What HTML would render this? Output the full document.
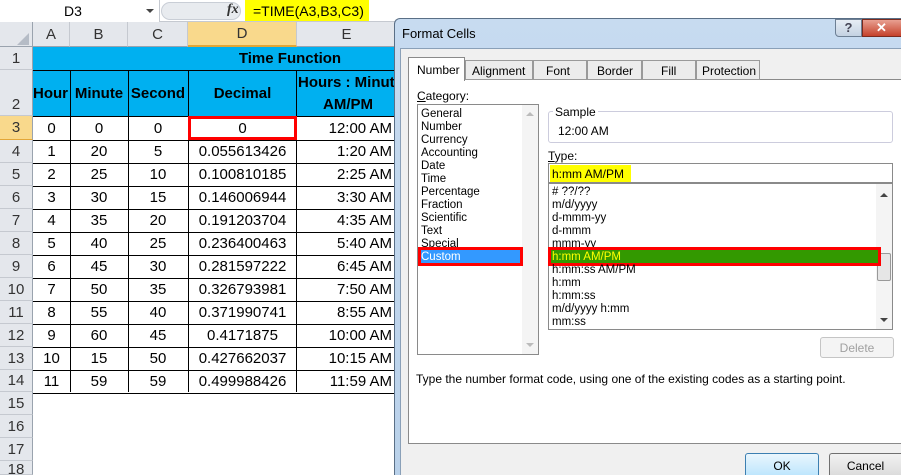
<!DOCTYPE html><html><head><style>
*{margin:0;padding:0;box-sizing:border-box}
html,body{width:901px;height:475px;overflow:hidden}
body{position:relative;background:#fff;font-family:"Liberation Sans",sans-serif}
.a{position:absolute}
.c{position:absolute;display:flex;align-items:center;justify-content:center;font-size:15px;color:#000;white-space:nowrap}
.rh{position:absolute;left:0;width:33px;background:#e4e7ec;border-bottom:1px solid #c5c9d0;border-right:1px solid #9aa3ae;display:flex;align-items:center;justify-content:center;font-size:15px;color:#333}
.ch{position:absolute;top:22px;height:25px;background:#e4e7ec;border-right:1px solid #c5c9d0;border-bottom:1px solid #9aa3ae;display:flex;align-items:center;justify-content:center;font-size:15px;color:#333}
.d{font-size:12px;color:#000}
.li{position:absolute;left:3px;font-size:11.5px;line-height:13px}
</style></head><body>
<div class="a" style="left:0;top:0;width:901px;height:22px;background:#fff;border-bottom:1px solid #c5c9d0"></div>
<div class="a" style="left:0;top:0;width:160px;height:22px;background:#fff;border-right:1px solid #c5c9d0;font-size:14px;padding:3px 0 0 64px">D3</div>
<div class="a" style="left:146px;top:9px;width:0;height:0;border-left:4px solid transparent;border-right:4px solid transparent;border-top:4px solid #444"></div>
<div class="a" style="left:161px;top:2px;width:80px;height:18px;background:#e8ebef;border-radius:9px;border:1px solid #c9ced6"></div>
<div class="a" style="left:227px;top:2px;font-family:'Liberation Serif',serif;font-style:italic;font-weight:bold;font-size:14px;color:#333">fx</div>
<div class="a" style="left:245px;top:0;width:124px;height:21px;background:#ffff00;font-size:14px;padding:3px 0 0 8px">=TIME(A3,B3,C3)</div>
<div class="a" style="left:0;top:22px;width:33px;height:25px;background:#e4e7ec;border-right:1px solid #9aa3ae;border-bottom:1px solid #9aa3ae"></div>
<div class="a" style="left:17px;top:33px;width:0;height:0;border-left:12px solid transparent;border-bottom:12px solid #b5bcc6"></div>
<div class="ch" style="left:33px;width:37px">A</div>
<div class="ch" style="left:70px;width:58px">B</div>
<div class="ch" style="left:128px;width:60px">C</div>
<div class="ch" style="left:188px;width:109px;background:#f9d98c;border-bottom:2px solid #e3a637">D</div>
<div class="ch" style="left:297px;width:100px">E</div>
<div class="rh" style="top:47px;height:23px">1</div>
<div class="rh" style="top:70px;height:46px;align-items:flex-end;padding-bottom:2px">2</div>
<div class="rh" style="top:116px;height:24px;background:#f9d98c;border-bottom-color:#e3a637">3</div>
<div class="rh" style="top:140px;height:23px">4</div>
<div class="rh" style="top:163px;height:23px">5</div>
<div class="rh" style="top:186px;height:23px">6</div>
<div class="rh" style="top:209px;height:23px">7</div>
<div class="rh" style="top:232px;height:23px">8</div>
<div class="rh" style="top:255px;height:23px">9</div>
<div class="rh" style="top:278px;height:23px">10</div>
<div class="rh" style="top:301px;height:23px">11</div>
<div class="rh" style="top:324px;height:23px">12</div>
<div class="rh" style="top:347px;height:23px">13</div>
<div class="rh" style="top:370px;height:22px">14</div>
<div class="rh" style="top:392px;height:23px">15</div>
<div class="rh" style="top:415px;height:23px">16</div>
<div class="rh" style="top:438px;height:23px">17</div>
<div class="rh" style="top:461px;height:14px;align-items:flex-start">18</div>
<div class="a" style="left:33px;top:47px;width:364px;height:69px;background:#00b0f0"></div>
<div class="c" style="left:33px;top:47px;width:514px;height:23px;font-weight:bold">Time Function</div>
<div class="a" style="left:33px;top:70px;width:364px;height:1px;background:#000"></div>
<div class="c" style="left:33px;top:70px;width:37px;height:46px;font-weight:bold;justify-content:flex-start;overflow:hidden">Hour</div>
<div class="c" style="left:70px;top:70px;width:58px;height:46px;font-weight:bold">Minute</div>
<div class="c" style="left:128px;top:70px;width:60px;height:46px;font-weight:bold">Second</div>
<div class="c" style="left:188px;top:70px;width:109px;height:46px;font-weight:bold">Decimal</div>
<div class="a" style="left:298px;top:72px;width:100px;font-size:15px;font-weight:bold;line-height:22px;text-align:center;white-space:nowrap;overflow:hidden">Hours : Minute<br>AM/PM</div>
<div class="a" style="left:70px;top:70px;width:1px;height:322px;background:#000"></div>
<div class="a" style="left:128px;top:70px;width:1px;height:322px;background:#000"></div>
<div class="a" style="left:188px;top:70px;width:1px;height:322px;background:#000"></div>
<div class="a" style="left:296px;top:70px;width:1px;height:322px;background:#000"></div>
<div class="a" style="left:33px;top:116px;width:364px;height:1px;background:#000"></div>
<div id="rows"></div>
<div class="a" style="left:188px;top:116px;width:109px;height:24px;border:3px solid #f00"></div>
<div class="a" style="left:394px;top:18px;width:507px;height:457px;border-radius:6px 0 0 0;background:linear-gradient(#c7dbf0,#b9d1ea);border:1px solid #5a6f86;border-right:none;border-bottom:none"></div>
<div class="a" style="left:402px;top:26px;font-size:13px;color:#000">Format Cells</div>
<div class="a" style="left:835px;top:19px;width:27px;height:18px;background:linear-gradient(#e6edf5,#c4d2e2);border:1px solid #6d7f94;border-radius:0 0 0 4px;text-align:center;font-size:13px;font-weight:bold;color:#445">?</div>
<div class="a" style="left:862px;top:19px;width:45px;height:18px;background:linear-gradient(#e8a091,#c5412b);border:1px solid #7a2a1e;text-align:center;font-size:13px;font-weight:bold;color:#fff;padding-right:6px">✕</div>
<div class="a" style="left:400px;top:48px;width:501px;height:427px;background:#f0f0f0;border:1px solid #8aa0b8;border-right:none;border-bottom:none"></div>
<div class="a" style="left:408px;top:79px;width:493px;height:365px;background:#fff;border:1px solid #8a8a8a;border-right:none"></div>
<div class="a" style="left:408px;top:57px;width:57px;height:24px;background:#fff;border:1px solid #8a8a8a;border-bottom:none;font-size:12px;padding:5px 0 0 8px">Number</div>
<div class="a" style="left:465px;top:60px;width:68px;height:20px;background:#ececec;border:1px solid #9a9a9a;font-size:12px;padding:3px 0 0 6px">Alignment</div>
<div class="a" style="left:533px;top:60px;width:54px;height:20px;background:#ececec;border:1px solid #9a9a9a;font-size:12px;padding:3px 0 0 12px">Font</div>
<div class="a" style="left:587px;top:60px;width:55px;height:20px;background:#ececec;border:1px solid #9a9a9a;font-size:12px;padding:3px 0 0 9px">Border</div>
<div class="a" style="left:642px;top:60px;width:54px;height:20px;background:#ececec;border:1px solid #9a9a9a;font-size:12px;padding:3px 0 0 18px">Fill</div>
<div class="a" style="left:696px;top:60px;width:64px;height:20px;background:#ececec;border:1px solid #9a9a9a;font-size:12px;padding:3px 0 0 5px">Protection</div>
<div class="a d" style="left:417px;top:89px"><u>C</u>ategory:</div>
<div class="a" style="left:417px;top:104px;width:122px;height:251px;border:1px solid #8a8a8a;background:#fff">
<div class="a" style="right:0;top:0;width:16px;height:249px;background:#f4f4f4"></div>
<div class="a" style="right:4px;top:7px;border-left:4px solid transparent;border-right:4px solid transparent;border-bottom:4px solid #bbb"></div>
<div class="a" style="right:4px;bottom:7px;border-left:4px solid transparent;border-right:4px solid transparent;border-top:4px solid #bbb"></div>
<div class="li" style="top:3px">General</div><div class="li" style="top:16px">Number</div><div class="li" style="top:29px">Currency</div><div class="li" style="top:42px">Accounting</div><div class="li" style="top:55px">Date</div><div class="li" style="top:68px">Time</div><div class="li" style="top:81px">Percentage</div><div class="li" style="top:94px">Fraction</div><div class="li" style="top:107px">Scientific</div><div class="li" style="top:120px">Text</div><div class="li" style="top:133px">Special</div>
<div class="a" style="left:0;top:142px;width:105px;height:19px;background:#3399ff;border:3px solid #f00"></div>
<div class="li" style="top:146px;color:#fff">Custom</div>
</div>
<div class="a" style="left:548px;top:111px;width:345px;height:32px;border:1px solid #ccd;border-radius:3px"></div>
<div class="a d" style="left:553px;top:105px;background:#fff;padding:0 2px">Sample</div>
<div class="a d" style="left:558px;top:124px">12:00 AM</div>
<div class="a d" style="left:548px;top:149px"><u>T</u>ype:</div>
<div class="a" style="left:548px;top:163px;width:345px;height:20px;border:1px solid #8a8a8a;background:#fff"></div>
<div class="a d" style="left:550px;top:165px;width:81px;height:17px;background:#ffff00;padding:2px 0 0 2px">h:mm AM/PM</div>
<div class="a" style="left:548px;top:183px;width:345px;height:147px;border:1px solid #8a8a8a;background:#fff">
<div class="a" style="right:0;top:0;width:16px;height:145px;background:#f4f4f4"></div>
<div class="a" style="right:4px;top:9px;border-left:4px solid transparent;border-right:4px solid transparent;border-bottom:4px solid #444"></div>
<div class="a" style="right:4px;bottom:7px;border-left:4px solid transparent;border-right:4px solid transparent;border-top:4px solid #444"></div>
<div class="a" style="right:1px;top:69px;width:14px;height:28px;background:#e6e6e6;border:1px solid #999;border-radius:2px"></div>
<div class="li" style="top:2px"># ??/??</div><div class="li" style="top:15px">m/d/yyyy</div><div class="li" style="top:28px">d-mmm-yy</div><div class="li" style="top:41px">d-mmm</div><div class="li" style="top:54px">mmm-yy</div>
<div class="a" style="left:-1px;top:63px;width:333px;height:19px;background:#339900;border:3px solid #f00"></div>
<div class="li" style="top:67px;color:#ffff00">h:mm AM/PM</div>
<div class="li" style="top:80px">h:mm:ss AM/PM</div><div class="li" style="top:93px">h:mm</div><div class="li" style="top:106px">h:mm:ss</div><div class="li" style="top:119px">m/d/yyyy h:mm</div><div class="li" style="top:132px">mm:ss</div>
</div>
<div class="a" style="left:820px;top:337px;width:74px;height:21px;border:1px solid #c5c5c5;border-radius:3px;background:#f4f4f4;color:#a0a0a0;font-size:12px;text-align:center;padding-top:3px">Delete</div>
<div class="a d" style="left:416px;top:372px">Type the number format code, using one of the existing codes as a starting point.</div>
<div class="a" style="left:745px;top:453px;width:74px;height:22px;border:1px solid #3c7fb1;border-bottom:none;border-radius:3px 3px 0 0;background:linear-gradient(#eaf6fd,#bee6fd);font-size:12px;text-align:center;padding-top:5px">OK</div>
<div class="a" style="left:829px;top:453px;width:72px;height:22px;border:1px solid #707070;border-right:none;border-bottom:none;border-radius:3px 0 0 0;background:linear-gradient(#f2f2f2,#dcdcdc);font-size:12px;text-align:center;padding:5px 0 0 0">Cancel</div>
<script>
var d=[[0,0,0,"0","12:00 AM"],[1,20,5,"0.055613426","1:20 AM"],[2,25,10,"0.100810185","2:25 AM"],[3,30,15,"0.146006944","3:30 AM"],[4,35,20,"0.191203704","4:35 AM"],[5,40,25,"0.236400463","5:40 AM"],[6,45,30,"0.281597222","6:45 AM"],[7,50,35,"0.326793981","7:50 AM"],[8,55,40,"0.371990741","8:55 AM"],[9,60,45,"0.4171875","10:00 AM"],[10,15,50,"0.427662037","10:15 AM"],[11,59,59,"0.499988426","11:59 AM"]];
var h="",cols=[[33,37],[70,58],[128,60],[188,109]];
for(var i=0;i<12;i++){var t=i==0?116:140+(i-1)*23,hh=i==0?24:23;
for(var j=0;j<4;j++)h+='<div class="c" style="left:'+cols[j][0]+'px;top:'+t+'px;width:'+cols[j][1]+'px;height:'+hh+'px">'+d[i][j]+'</div>';
h+='<div class="c" style="left:297px;top:'+t+'px;width:95px;height:'+hh+'px;justify-content:flex-end">'+d[i][4]+'</div>';
h+='<div class="a" style="left:33px;top:'+(t+hh)+'px;width:364px;height:1px;background:#000"></div>';}
document.getElementById("rows").innerHTML=h;
</script>
</body></html>
